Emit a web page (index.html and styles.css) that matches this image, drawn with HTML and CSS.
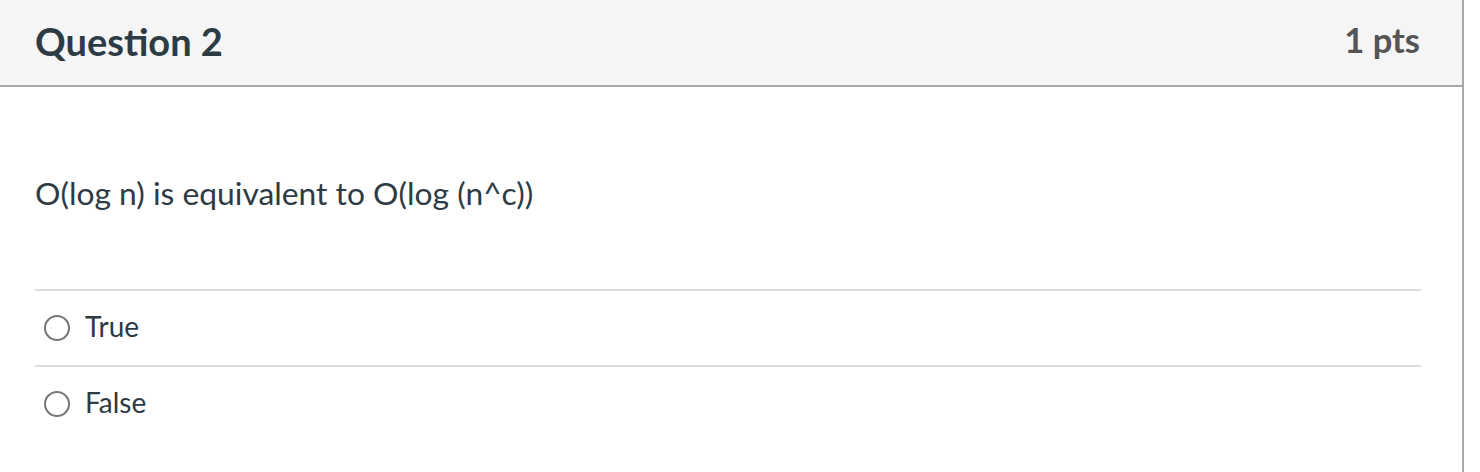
FILE: index.html
```html
<!DOCTYPE html>
<html lang="en">
<head>
<meta charset="utf-8">
<title>Question 2</title>
<link rel="stylesheet" href="styles.css">
</head>
<body>
<div class="question">
  <div class="question-header">
    <h2 class="question-title">Question 2</h2>
    <span class="question-points">1 pts</span>
  </div>
  <div class="question-body">
    <p class="question-text">O(log n) is equivalent to O(log (n^c))</p>
    <div class="answers">
      <label class="answer">
        <span class="radio"></span>
        <span class="answer-label">True</span>
      </label>
      <label class="answer">
        <span class="radio"></span>
        <span class="answer-label">False</span>
      </label>
    </div>
  </div>
</div>
</body>
</html>
```

FILE: styles.css
```css
html, body {
  margin: 0;
  padding: 0;
  background: #ffffff;
}

body {
  font-family: Lato, "Noto Sans", "Liberation Sans", sans-serif;
  color: #2d3b45;
  overflow: hidden;
}

.question {
  width: 1462px;
  min-height: 472px;
  border-right: 2px solid #a8a8a8;
  box-sizing: content-box;
}

.question-header {
  height: 81px;
  background: #f5f5f5;
  border-bottom: 2px solid #a8a8a8;
  display: flex;
  align-items: center;
  justify-content: space-between;
  padding: 0 42px 4px 35px;
}

.question-title {
  margin: 0;
  font-size: 38px;
  font-weight: 700;
  line-height: 1;
  color: #2d3b45;
}

.question-points {
  font-size: 34.5px;
  font-weight: 700;
  line-height: 1;
  color: #555555;
}

.question-body {
  padding: 0 41px 0 35px;
}

.question-text {
  margin: 0;
  padding-top: 85px;
  padding-bottom: 75px;
  font-size: 31.8px;
  line-height: 42px;
}

.answers {
  display: flex;
  flex-direction: column;
}

.answer {
  display: flex;
  align-items: center;
  height: 74px;
  border-top: 2px solid #dcdcdc;
  padding-left: 9px;
  gap: 15px;
}

.radio {
  width: 26px;
  height: 26px;
  box-sizing: border-box;
  border: 2px solid #767676;
  border-radius: 50%;
  background: #ffffff;
  flex: none;
}

.answer-label {
  font-size: 28px;
  line-height: 42px;
  padding-bottom: 4px;
}
```
